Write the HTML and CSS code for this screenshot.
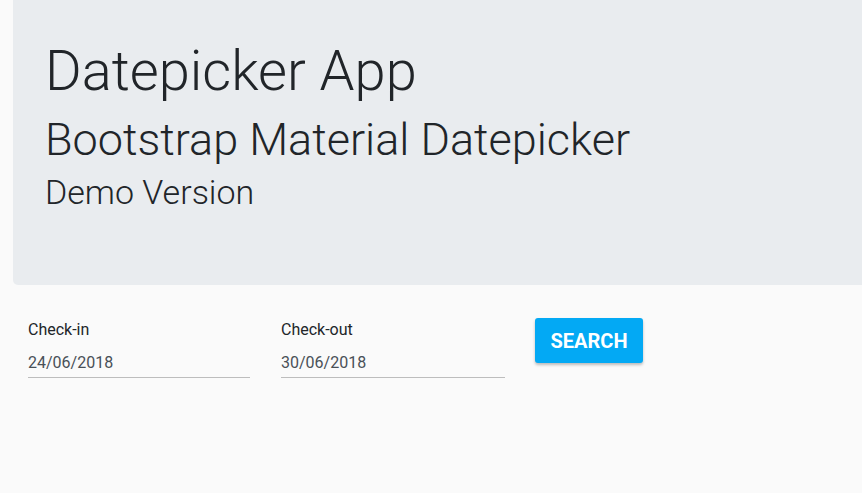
FILE: index.html
```html
<!DOCTYPE html>
<html>
<head>
<meta charset="utf-8">
<link rel="stylesheet" href="styles.css">
</head>
<body>
<div class="jumbotron">
  <h1 class="title">Datepicker App</h1>
  <h2 class="subtitle">Bootstrap Material Datepicker</h2>
  <h3 class="version">Demo Version</h3>
</div>
<form class="search-form">
  <div class="field field-in">
    <label class="label">Check-in</label>
    <div class="value">24/06/2018</div>
  </div>
  <div class="field field-out">
    <label class="label">Check-out</label>
    <div class="value">30/06/2018</div>
  </div>
  <button type="button" class="btn-search">SEARCH</button>
</form>
</body>
</html>
```
FILE: styles.css
```css
html, body {
  margin: 0;
  padding: 0;
  background: #fafafa;
  font-family: Roboto, "Liberation Sans", sans-serif;
  color: #212529;
}
.jumbotron {
  margin-left: 13px;
  background: #e9ecef;
  border-bottom-left-radius: 5px;
  height: 285px;
  padding: 38px 33px 0 32px;
  box-sizing: border-box;
}
.title {
  margin: 0;
  font-size: 56px;
  font-weight: 300;
  line-height: 67px;
}
.subtitle {
  margin: 8px 0 0;
  font-size: 45px;
  font-weight: 300;
  line-height: 54px;
}
.version {
  margin: 5px 0 0;
  font-size: 34px;
  font-weight: 300;
  line-height: 41px;
}
.search-form {
  display: flex;
  align-items: flex-start;
  padding: 33px 0 0 28px;
}
.field {
  display: flex;
  flex-direction: column;
}
.field-in { width: 222px; margin-right: 31px; }
.field-out { width: 224px; margin-right: 30px; }
.label {
  font-size: 16px;
  color: #212529;
  line-height: 19px;
  margin-top: 2px;
}
.value {
  font-size: 16px;
  color: #495057;
  line-height: 19px;
  margin-top: 14px;
  padding-bottom: 5px;
  border-bottom: 1px solid #bdbdbd;
}
.btn-search {
  width: 108px;
  height: 45px;
  background: #03a9f4;
  color: #fff;
  border: none;
  border-radius: 3px;
  font-family: Roboto, "Liberation Sans", sans-serif;
  font-weight: 700;
  font-size: 20px;
  padding: 0;
  box-shadow: 0 2px 3px rgba(0,0,0,0.25);
}
```
